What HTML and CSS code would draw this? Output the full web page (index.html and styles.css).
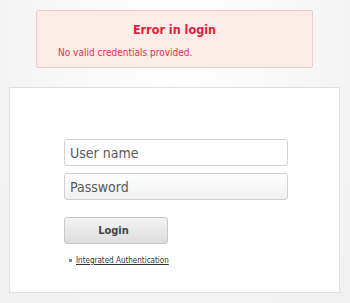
FILE: index.html
```html
<!DOCTYPE html>
<html>
<head>
<meta charset="utf-8">
<link rel="stylesheet" href="styles.css">
</head>
<body>
<div class="page">
  <div class="error">
    <div class="error-title">Error in login</div>
    <div class="error-text">No valid credentials provided.</div>
  </div>
  <div class="panel">
    <form class="form">
      <input class="field" type="text" placeholder="User name">
      <input class="field field-pass" type="password" placeholder="Password">
      <button class="btn" type="button">Login</button>
      <div class="alt">
        <span class="bullet"></span>
        <a class="alt-link" href="#">Integrated Authentication</a>
      </div>
    </form>
  </div>
</div>
</body>
</html>
```
FILE: styles.css
```css
html, body {
  margin: 0;
  padding: 0;
}
body {
  width: 350px;
  height: 303px;
  overflow: hidden;
  background: radial-gradient(ellipse at 50% 10%, #ffffff 0%, #f7f7f7 50%, #f0f0f0 100%);
  font-family: "DejaVu Sans Condensed", "DejaVu Sans", sans-serif;
}
.page {
  padding-top: 10px;
}
.error {
  box-sizing: border-box;
  margin-left: 36px;
  width: 277px;
  height: 58px;
  background: #fbece8;
  border: 1px solid #f6c8c8;
  border-radius: 2px;
  padding-top: 11px;
}
.error-title {
  text-align: center;
  color: #e51b3e;
  font-weight: bold;
  font-size: 12.5px;
  line-height: 16px;
}
.error-text {
  margin-top: 8px;
  padding-left: 21px;
  color: #e8304f;
  font-size: 10px;
  line-height: 13px;
}
.panel {
  box-sizing: border-box;
  margin-top: 19px;
  margin-left: 9px;
  width: 331px;
  height: 206px;
  background: #ffffff;
  border: 1px solid #e0e0e0;
  padding: 51px 0 0 54px;
}
.form {
  display: flex;
  flex-direction: column;
  align-items: flex-start;
  margin: 0;
}
.field {
  box-sizing: border-box;
  width: 224px;
  height: 27px;
  margin: 0;
  border: 1px solid #cfcfcf;
  border-radius: 3px;
  padding: 0 5px;
  font-family: "DejaVu Sans Condensed", "DejaVu Sans", sans-serif;
  font-size: 14px;
  color: #555;
  background: #fff;
  outline: none;
}
.field::placeholder {
  color: #5a5a5a;
}
.field-pass {
  margin-top: 7px;
  background: linear-gradient(#ffffff, #f0f0f0);
}
.btn {
  box-sizing: border-box;
  margin-top: 17px;
  width: 104px;
  height: 27px;
  border: 1px solid #c8c8c8;
  border-radius: 3px;
  background: linear-gradient(#f4f4f4, #dcdcdc);
  font-family: "DejaVu Sans Condensed", "DejaVu Sans", sans-serif;
  font-weight: bold;
  font-size: 11px;
  color: #444;
  padding: 0 5px 0 0;
}
.alt {
  display: flex;
  align-items: center;
  margin-top: 12px;
  margin-left: 5px;
  gap: 4px;
}
.bullet {
  width: 3px;
  height: 3px;
  background: #888;
}
.alt-link {
  font-size: 8px;
  color: #333;
  text-decoration: underline;
}
```
